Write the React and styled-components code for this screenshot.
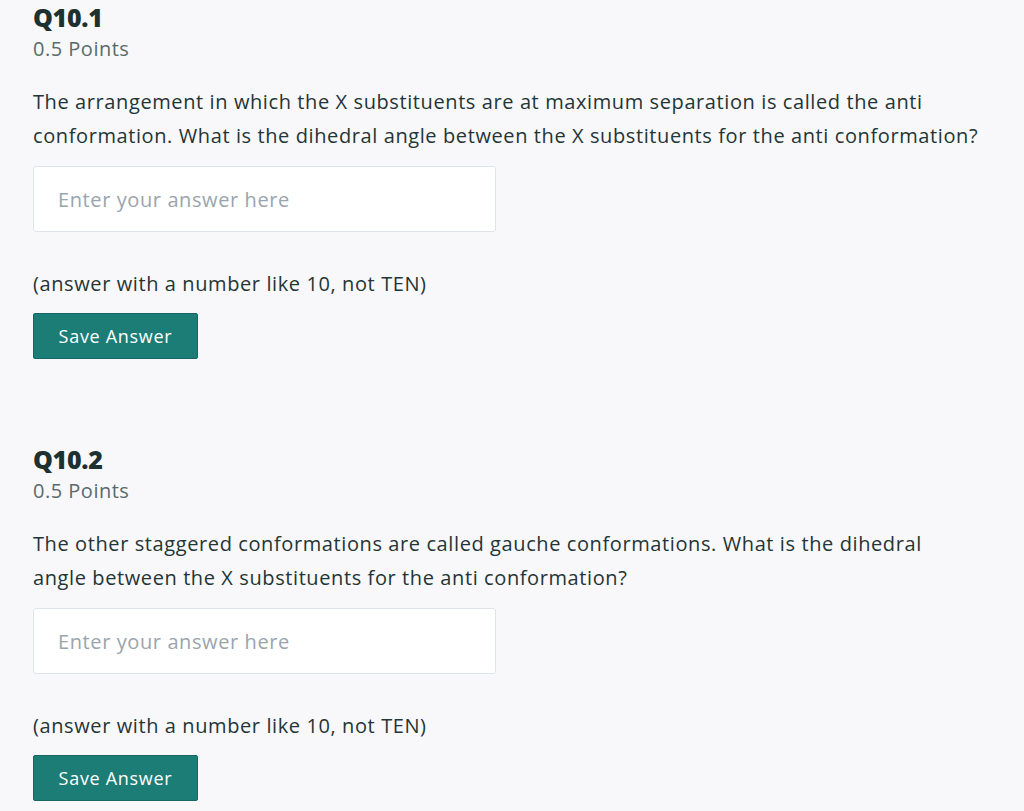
import React from "react";
import styled, { createGlobalStyle } from "styled-components";

const GlobalStyle = createGlobalStyle`
  html, body {
    margin: 0;
    padding: 0;
    background: #f8f8fa;
  }
  body {
    font-family: "Open Sans", "Lato", sans-serif;
    color: #243536;
    overflow: hidden;
  }
`;

const Page = styled.div`
  padding: 0 33px;
  width: 1024px;
  box-sizing: border-box;
`;

const Question = styled.section`
  padding-top: 2px;
  padding-bottom: 83px;

  &:last-child {
    padding-bottom: 0;
  }
`;

const Title = styled.h2`
  margin: 0;
  font-size: 25px;
  font-weight: 800;
  line-height: 30px;
  letter-spacing: -0.3px;
  color: #1d3131;
`;

const Points = styled.div`
  margin-top: 2px;
  font-size: 20px;
  line-height: 30px;
  letter-spacing: 0.5px;
  color: #5a6a6c;
`;

const Prompt = styled.p`
  margin: 21px 0 0;
  font-size: 20px;
  line-height: 34px;
  letter-spacing: 0.6px;
  color: #243536;
`;

const AnswerInput = styled.input`
  display: block;
  margin-top: 13px;
  width: 463px;
  height: 66px;
  box-sizing: border-box;
  padding: 0 24px;
  border: 1px solid #dfe4ea;
  border-radius: 3px;
  background: #fff;
  font-family: inherit;
  font-size: 20px;
  letter-spacing: 0.6px;
  color: #243536;
  outline: none;

  &::placeholder {
    color: #9aa4ad;
  }
`;

const Hint = styled.p`
  margin: 35px 0 0;
  font-size: 20px;
  line-height: 34px;
  letter-spacing: 0.6px;
  color: #243536;
`;

const SaveButton = styled.button`
  display: block;
  margin-top: 12px;
  width: 165px;
  height: 46px;
  border: 1px solid #17665f;
  border-radius: 2px;
  background: #1c7d76;
  color: #fff;
  font-family: inherit;
  font-size: 18px;
  letter-spacing: 0.7px;
  cursor: pointer;
`;

const questions = [
  {
    id: "Q10.1",
    points: "0.5 Points",
    prompt:
      "The arrangement in which the X substituents are at maximum separation is called the anti conformation. What is the dihedral angle between the X substituents for the anti conformation?",
  },
  {
    id: "Q10.2",
    points: "0.5 Points",
    prompt:
      "The other staggered conformations are called gauche conformations. What is the dihedral angle\u00a0between the X substituents for the anti conformation?",
  },
];

export default function App() {
  return (
    <Page>
      <GlobalStyle />
      {questions.map((q) => (
        <Question key={q.id}>
          <Title>{q.id}</Title>
          <Points>{q.points}</Points>
          <Prompt>{q.prompt}</Prompt>
          <AnswerInput placeholder="Enter your answer here" />
          <Hint>(answer with a number like 10, not TEN)</Hint>
          <SaveButton>Save Answer</SaveButton>
        </Question>
      ))}
    </Page>
  );
}
